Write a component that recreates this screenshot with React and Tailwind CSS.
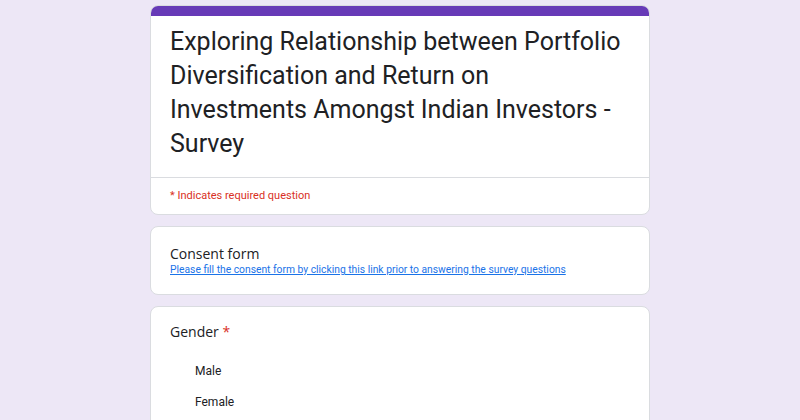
import React from "react";

const sans = { fontFamily: "Roboto, 'Liberation Sans', sans-serif" };

export default function App() {
    return (
        <div className="min-h-[420px] bg-[#ede7f6] pt-[5px]" style={sans}>
            <div className="w-[500px] mx-auto flex flex-col gap-[11px]">
                <div className="bg-white rounded-lg border border-[#dadce0] overflow-hidden">
                    <div className="h-[10px] bg-[#673ab7]" />
                    <div className="px-[19px] pt-[9px] pb-[16px] border-b border-[#dadce0]">
                        <h1 className="text-[25px] leading-[34px] text-[#202124] font-['Roboto']">
                            Exploring Relationship between Portfolio<br />
                            Diversification and Return on<br />
                            Investments Amongst Indian Investors -<br />
                            Survey
                        </h1>
                    </div>
                    <div className="px-[19px] h-[36px] text-[11px] text-[#d93025] flex items-center">
                        * Indicates required question
                    </div>
                </div>

                <div className="bg-white rounded-lg border border-[#dadce0] px-[19px] pt-[18px] pb-[17px]">
                    <div className="text-[14px] leading-[18px] text-[#202124] font-['Open_Sans']">Consent form</div>
                    <a href="#" className="block text-[10.3px] leading-[14px] text-[#1a73e8] underline">
                        Please fill the consent form by clicking this link prior to answering the survey questions
                    </a>
                </div>

                <div className="bg-white rounded-lg border border-[#dadce0] px-[19px] pt-[16px] pb-[24px]">
                    <div className="text-[14px] leading-[18px] text-[#202124] font-['Open_Sans']">
                        Gender <span className="text-[#d93025]">*</span>
                    </div>
                    <div className="flex flex-col gap-[13px] mt-[21px] pl-[25px]">
                        <div className="text-[12px] leading-[18px] text-[#202124]">Male</div>
                        <div className="text-[12px] leading-[18px] text-[#202124]">Female</div>
                    </div>
                </div>
            </div>
        </div>
    );
}
